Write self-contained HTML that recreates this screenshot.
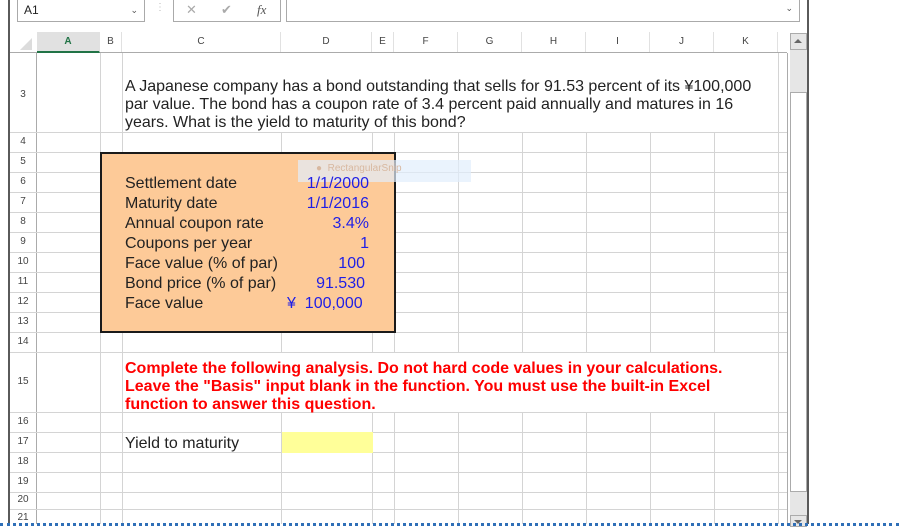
<!DOCTYPE html>
<html><head><meta charset="utf-8"><style>
*{margin:0;padding:0;box-sizing:border-box}
body{width:899px;height:528px;background:#fff;position:relative;overflow:hidden;font-family:"Liberation Sans",Arial,sans-serif}
.a{position:absolute}
.hl{position:absolute;height:1px;background:#d4d4d4}
.vl{position:absolute;width:1px;background:#d4d4d4}
.ch{position:absolute;top:32px;height:20px;font-size:10px;color:#444;text-align:center;line-height:20px;border-right:1px solid #e1e1e1}
.rn{position:absolute;left:10px;width:26px;font-size:10px;color:#444;text-align:center}
.t{position:absolute;font-size:16px;color:#222;white-space:nowrap;line-height:20px}
.b{color:#1f1fe6;text-align:right}
</style></head><body>
<div class="a" style="left:8px;top:0;width:2px;height:524px;background:#5a5a5a"></div>
<div class="a" style="left:807px;top:0;width:2px;height:524px;background:#5a5a5a"></div>
<div class="a" style="left:17px;top:0;width:128px;height:22px;border:1px solid #aaa;border-top:none;font-size:12px;line-height:20px;padding-left:6px;color:#222">A1<span style="position:absolute;right:6px;font-size:9px;color:#555">&#8964;</span></div>
<div class="a" style="left:155px;top:2px;font-size:10px;color:#bbb">&#8942;</div>
<div class="a" style="left:173px;top:0;width:108px;height:22px;border:1px solid #aaa;border-top:none;font-size:13px;color:#aaa;line-height:20px"><span style="position:absolute;left:12px">&#10005;</span><span style="position:absolute;left:47px">&#10004;</span><span style="position:absolute;left:83px;font-family:'Liberation Serif';font-style:italic;color:#555">fx</span></div>
<div class="a" style="left:286px;top:0;width:514px;height:22px;border:1px solid #aaa;border-top:none"><span style="position:absolute;right:6px;top:3px;font-size:9px;color:#555">&#8964;</span></div>
<div class="a" style="left:10px;top:32px;width:777px;height:21px;background:#fff;border-bottom:1px solid #ababab"></div>
<div class="a" style="left:20px;top:38px;width:0;height:0;border-left:12px solid transparent;border-bottom:12px solid #dcdcdc"></div>
<div class="ch" style="left:37px;width:63px;background:#e1e1e1;color:#217346;font-weight:bold;border-bottom:2px solid #217346;height:21px">A</div>
<div class="ch" style="left:100px;width:22px">B</div>
<div class="ch" style="left:122px;width:159px">C</div>
<div class="ch" style="left:281px;width:91px">D</div>
<div class="ch" style="left:372px;width:22px">E</div>
<div class="ch" style="left:394px;width:64px">F</div>
<div class="ch" style="left:458px;width:64px">G</div>
<div class="ch" style="left:522px;width:64px">H</div>
<div class="ch" style="left:586px;width:64px">I</div>
<div class="ch" style="left:650px;width:64px">J</div>
<div class="ch" style="left:714px;width:64px">K</div>
<div class="a" style="left:36px;top:53px;width:1px;height:471px;background:#ababab"></div>
<div class="vl" style="left:100px;top:53px;height:471px"></div>
<div class="vl" style="left:122px;top:53px;height:471px"></div>
<div class="vl" style="left:281px;top:132px;height:220px"></div>
<div class="vl" style="left:372px;top:132px;height:220px"></div>
<div class="vl" style="left:394px;top:132px;height:220px"></div>
<div class="vl" style="left:458px;top:132px;height:220px"></div>
<div class="vl" style="left:522px;top:132px;height:220px"></div>
<div class="vl" style="left:586px;top:132px;height:220px"></div>
<div class="vl" style="left:650px;top:132px;height:220px"></div>
<div class="vl" style="left:714px;top:132px;height:220px"></div>
<div class="vl" style="left:281px;top:412px;height:112px"></div>
<div class="vl" style="left:372px;top:412px;height:112px"></div>
<div class="vl" style="left:394px;top:412px;height:112px"></div>
<div class="vl" style="left:458px;top:412px;height:112px"></div>
<div class="vl" style="left:522px;top:412px;height:112px"></div>
<div class="vl" style="left:586px;top:412px;height:112px"></div>
<div class="vl" style="left:650px;top:412px;height:112px"></div>
<div class="vl" style="left:714px;top:412px;height:112px"></div>
<div class="vl" style="left:778px;top:53px;height:471px"></div>
<div class="a" style="left:787px;top:53px;width:1px;height:471px;background:#ababab"></div>
<div class="hl" style="left:10px;top:132px;width:777px"></div>
<div class="hl" style="left:10px;top:152px;width:777px"></div>
<div class="hl" style="left:10px;top:172px;width:777px"></div>
<div class="hl" style="left:10px;top:192px;width:777px"></div>
<div class="hl" style="left:10px;top:212px;width:777px"></div>
<div class="hl" style="left:10px;top:232px;width:777px"></div>
<div class="hl" style="left:10px;top:252px;width:777px"></div>
<div class="hl" style="left:10px;top:272px;width:777px"></div>
<div class="hl" style="left:10px;top:292px;width:777px"></div>
<div class="hl" style="left:10px;top:312px;width:777px"></div>
<div class="hl" style="left:10px;top:332px;width:777px"></div>
<div class="hl" style="left:10px;top:352px;width:777px"></div>
<div class="hl" style="left:10px;top:412px;width:777px"></div>
<div class="hl" style="left:10px;top:432px;width:777px"></div>
<div class="hl" style="left:10px;top:452px;width:777px"></div>
<div class="hl" style="left:10px;top:472px;width:777px"></div>
<div class="hl" style="left:10px;top:492px;width:777px"></div>
<div class="hl" style="left:10px;top:509px;width:777px"></div>
<div class="rn" style="top:89px">3</div>
<div class="rn" style="top:136px">4</div>
<div class="rn" style="top:156px">5</div>
<div class="rn" style="top:176px">6</div>
<div class="rn" style="top:196px">7</div>
<div class="rn" style="top:216px">8</div>
<div class="rn" style="top:236px">9</div>
<div class="rn" style="top:256px">10</div>
<div class="rn" style="top:276px">11</div>
<div class="rn" style="top:296px">12</div>
<div class="rn" style="top:316px">13</div>
<div class="rn" style="top:336px">14</div>
<div class="rn" style="top:376px">15</div>
<div class="rn" style="top:416px">16</div>
<div class="rn" style="top:436px">17</div>
<div class="rn" style="top:456px">18</div>
<div class="rn" style="top:476px">19</div>
<div class="rn" style="top:494px">20</div>
<div class="rn" style="top:512px">21</div>
<div class="t" style="left:125px;top:78px;line-height:18px">A Japanese company has a bond outstanding that sells for 91.53 percent of its ¥100,000<br>par value. The bond has a coupon rate of 3.4 percent paid annually and matures in 16<br>years. What is the yield to maturity of this bond?</div>
<div class="a" style="left:100px;top:152px;width:296px;height:181px;background:#fdca98;border:2px solid #1a1a1a"></div>
<div class="a" style="left:298px;top:160px;width:173px;height:22px;background:rgba(225,238,252,.7)"></div>
<div class="a" style="left:316px;top:163px;font-size:10px;color:#d8b8a0">● &nbsp;RectangularSnip</div>
<div class="t" style="left:125px;top:174px">Settlement date<br>Maturity date<br>Annual coupon rate<br>Coupons per year<br>Face value (% of par)<br>Bond price (% of par)<br>Face value</div>
<div class="t b" style="left:270px;width:99px;top:174px">1/1/2000<br>1/1/2016<br>3.4%<br>1</div>
<div class="t b" style="left:270px;width:95px;top:254px">100<br>91.530</div>
<div class="t" style="left:287px;top:294px;color:#1f1fe6">¥&nbsp; 100,000</div>
<div class="t" style="left:125px;top:360px;color:#f00;font-weight:bold;font-size:16px;line-height:18px">Complete the following analysis. Do not hard code values in your calculations.<br>Leave the "Basis" input blank in the function. You must use the built-in Excel<br>function to answer this question.</div>
<div class="t" style="left:125px;top:434px">Yield to maturity</div>
<div class="a" style="left:282px;top:432px;width:91px;height:21px;background:#ffff99"></div>
<div class="a" style="left:790px;top:33px;width:17px;height:491px;background:#e6e6e6"></div>
<div class="a" style="left:790px;top:33px;width:17px;height:17px;border:1px solid #ababab;background:#e6e6e6"></div>
<div class="a" style="left:794px;top:39px;width:0;height:0;border-left:4px solid transparent;border-right:4px solid transparent;border-bottom:4px solid #666"></div>
<div class="a" style="left:790px;top:92px;width:17px;height:400px;background:#fff;border:1px solid #ababab"></div>
<div class="a" style="left:790px;top:515px;width:17px;height:12px;border:1px solid #ababab;background:#e6e6e6"></div>
<div class="a" style="left:794px;top:520px;width:0;height:0;border-left:4px solid transparent;border-right:4px solid transparent;border-top:4px solid #666"></div>
<div class="a" style="left:0;top:523px;width:899px;height:3px;border-top:3px dotted #2f6fb7"></div>
</body></html>
